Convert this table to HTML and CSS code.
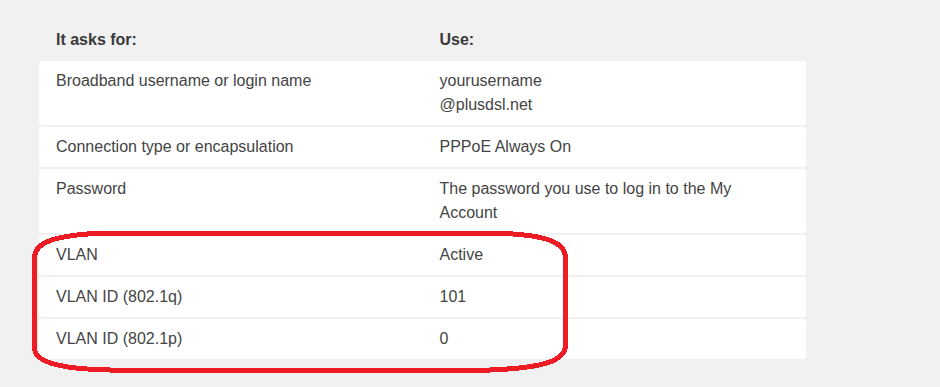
FILE: index.html
```html
<!DOCTYPE html>
<html lang="en">
<head>
    <meta charset="UTF-8">
    <meta name="viewport" content="width=device-width, initial-scale=1.0">
    <title>Router settings</title>
    <link rel="stylesheet" href="styles.css">
</head>
<body>
    <div class="settings">
        <div class="settings-head">
            <div class="cell">It asks for:</div>
            <div class="cell">Use:</div>
        </div>

        <div class="row">
            <div class="cell">Broadband username or login name</div>
            <div class="cell">yourusername<br>@plusdsl.net</div>
        </div>
        <div class="row">
            <div class="cell">Connection type or encapsulation</div>
            <div class="cell">PPPoE Always On</div>
        </div>
        <div class="row">
            <div class="cell">Password</div>
            <div class="cell">The password you use to log in to the My Account</div>
        </div>
        <div class="row">
            <div class="cell">VLAN</div>
            <div class="cell">Active</div>
        </div>
        <div class="row">
            <div class="cell">VLAN ID (802.1q)</div>
            <div class="cell">101</div>
        </div>
        <div class="row">
            <div class="cell">VLAN ID (802.1p)</div>
            <div class="cell">0</div>
        </div>

        <!-- hand-drawn ring round the VLAN rows -->
        <svg class="ring" width="940" height="387" viewBox="0 0 940 387">
            <path d="M105 233 L490 233 C540 234 565.5 240 565.5 258 L565.5 345 C565.5 362 540 368 490 370 L110 370 C60 369 34.5 362 34.5 348 L34.5 258 C34.5 242 55 235 105 233 Z"
                  fill="none" stroke="#ed1c24" stroke-width="5" shape-rendering="crispEdges"/>
        </svg>
    </div>
</body>
</html>
```

FILE: styles.css
```css
body {
    font-family: "Liberation Sans", Arial, sans-serif;
    font-size: 16px;
    line-height: 24px;
    background-color: #f1f1f1;
    color: #444;
    margin: 0;
    padding: 20px 0 0 39px;
}

.settings {
    width: 767px;
    display: flex;
    flex-direction: column;
    gap: 2px;
}

.settings-head,
.row {
    display: grid;
    grid-template-columns: 1fr 1fr;
}

.settings-head {
    font-weight: bold;
    color: #3a3a3a;
    padding: 8px 0 7px;
}

.row {
    background: #fff;
    border-radius: 3px;
    padding: 8px 0;
}

.cell {
    padding: 0 17px;
}

.ring {
    position: absolute;
    top: 0;
    left: 0;
    pointer-events: none;
}
```
